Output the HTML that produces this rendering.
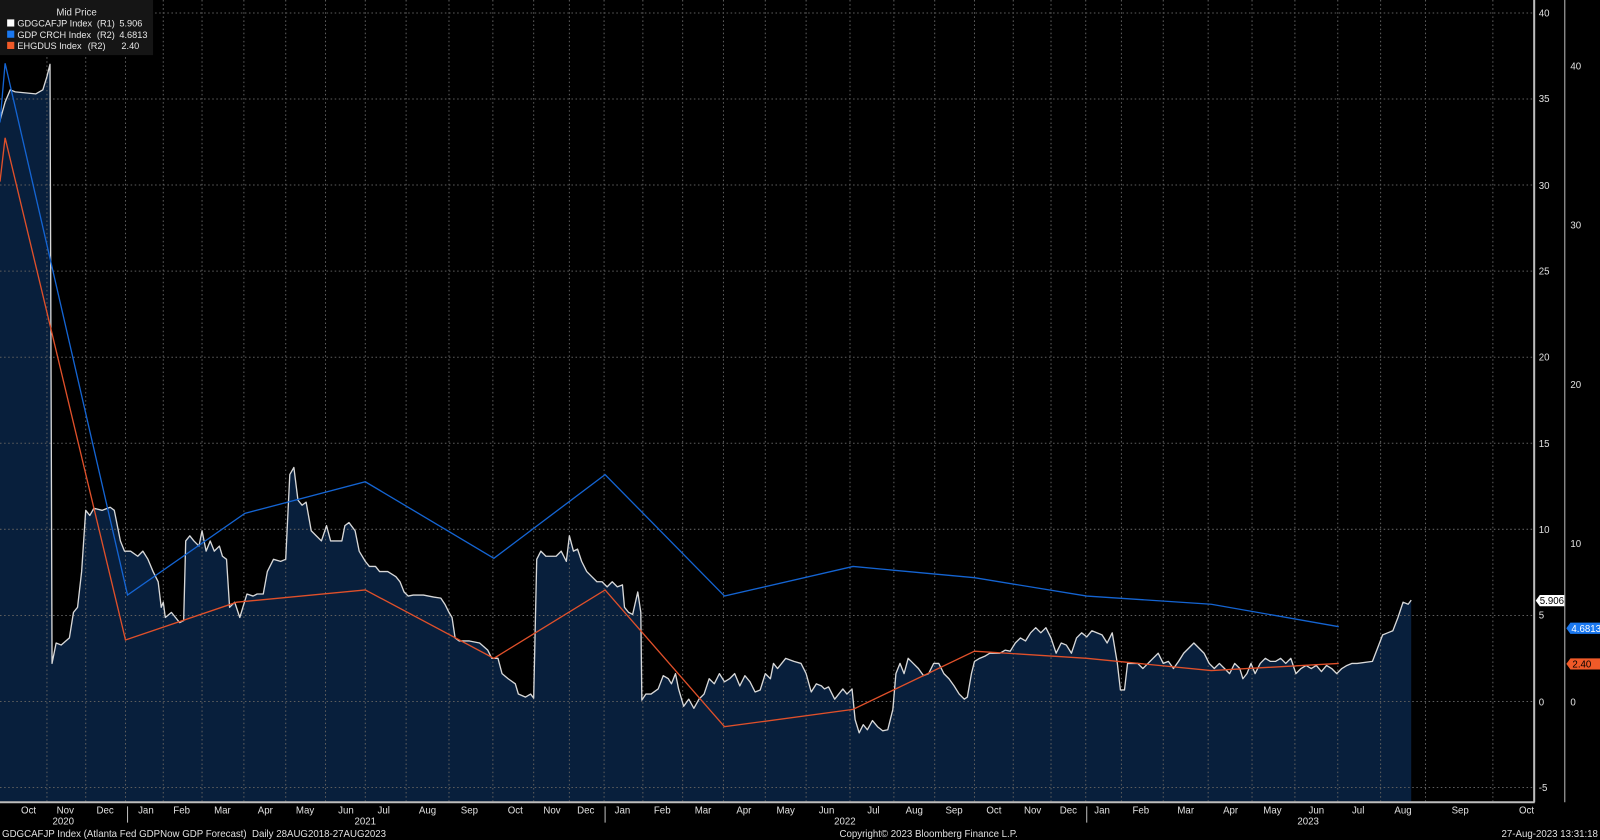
<!DOCTYPE html>
<html><head><meta charset="utf-8"><style>
html,body{margin:0;padding:0;background:#000;overflow:hidden}
svg{display:block}
text{font-family:"Liberation Sans",sans-serif}
</style></head><body>
<svg width="1600" height="840" viewBox="0 0 1568 823" preserveAspectRatio="none" xmlns="http://www.w3.org/2000/svg">
<rect width="1568" height="823" fill="#000"/>
<path fill="#081f3c" d="M0,785 L0,118 5,100 10,88 15,90 35,92 42,88 46,75 49,63 51,650 53,640 55,630 60,632 68,625 72,600 76,595 80,560 84,500 88,505 92,498 100,500 108,497 112,500 118,530 122,540 128,540 135,545 140,540 145,548 150,560 155,570 158,595 160,590 162,605 168,600 172,605 176,610 180,608 182,530 186,525 190,530 195,535 198,520 202,540 206,530 210,540 215,535 218,545 222,548 225,595 230,590 235,605 238,595 242,582 248,584 252,582 258,582 262,560 268,548 275,550 280,548 284,465 288,458 292,490 296,495 300,492 305,520 310,525 315,530 320,515 324,530 328,530 335,530 338,515 342,512 348,520 352,540 358,550 362,555 368,555 372,560 380,560 388,565 392,570 396,580 400,584 405,583 415,583 425,585 432,586 436,592 440,600 443,605 446,625 450,628 460,628 470,630 478,637 482,645 488,645 492,660 498,665 505,670 508,680 515,683 520,680 523,684 526,548 530,540 535,545 545,545 550,540 555,550 558,525 562,540 566,538 570,550 575,560 580,565 585,570 590,570 595,575 600,570 605,575 610,573 612,595 616,600 620,602 625,580 628,600 629,686 633,680 638,680 645,675 650,662 655,665 658,670 662,660 665,675 670,692 675,685 680,694 685,685 690,680 695,665 700,670 705,660 710,668 715,665 720,660 725,672 730,662 735,668 740,678 745,676 750,660 755,665 758,650 762,655 770,645 778,648 785,650 790,660 795,678 800,670 805,672 808,675 812,673 818,685 822,680 826,675 830,680 835,675 838,705 842,718 846,710 850,715 855,706 860,712 865,716 870,715 875,695 878,660 882,650 886,660 890,645 895,650 900,655 905,662 910,660 915,650 920,650 925,660 930,665 935,672 940,680 945,685 948,683 952,660 955,648 960,645 965,643 970,640 975,640 980,640 985,637 990,638 995,630 1000,625 1005,628 1010,620 1015,615 1020,620 1025,615 1030,625 1035,640 1040,630 1045,632 1050,640 1055,625 1060,620 1065,624 1070,618 1080,622 1085,630 1090,620 1095,650 1098,676 1102,676 1105,650 1110,650 1115,650 1120,655 1125,650 1130,645 1135,640 1140,650 1145,648 1150,655 1155,648 1160,640 1165,635 1170,630 1175,635 1180,640 1185,650 1190,655 1195,650 1200,655 1205,660 1210,650 1215,655 1218,665 1222,660 1226,650 1230,660 1235,650 1240,645 1245,648 1250,648 1255,645 1260,650 1265,645 1270,660 1275,655 1280,652 1285,655 1290,652 1295,658 1300,652 1305,655 1310,660 1315,655 1320,652 1325,650 1330,650 1345,648 1350,635 1355,622 1360,620 1365,618 1370,605 1375,590 1380,592 1383,588 L1383,785 Z"/>
<g stroke="#5e5e5e" stroke-width="1" stroke-dasharray="1.5,2.5" fill="none">
<path d="M0,12.7H1503M0,97H1503M0,181.3H1503M0,265.6H1503M0,350H1503M0,434.3H1503M0,518.6H1503M0,603H1503M0,687.3H1503M0,771.6H1503"/>
<path d="M46,0V785M84,0V785M123,0V785M160,0V785M198,0V785M239,0V785M280,0V785M319,0V785M358,0V785M398,0V785M440,0V785M483,0V785M523,0V785M558,0V785M592,0V785M630,0V785M669,0V785M709,0V785M750,0V785M790,0V785M833,0V785M876,0V785M916,0V785M955,0V785M993,0V785M1030,0V785M1064,0V785M1099,0V785M1140,0V785M1184,0V785M1227,0V785M1269,0V785M1311,0V785M1353,0V785M1397,0V785M1463,0V785"/>
</g>
<polyline fill="none" stroke="#d8d8d8" stroke-width="1.3" stroke-linejoin="round" points="0,118 5,100 10,88 15,90 35,92 42,88 46,75 49,63 51,650 53,640 55,630 60,632 68,625 72,600 76,595 80,560 84,500 88,505 92,498 100,500 108,497 112,500 118,530 122,540 128,540 135,545 140,540 145,548 150,560 155,570 158,595 160,590 162,605 168,600 172,605 176,610 180,608 182,530 186,525 190,530 195,535 198,520 202,540 206,530 210,540 215,535 218,545 222,548 225,595 230,590 235,605 238,595 242,582 248,584 252,582 258,582 262,560 268,548 275,550 280,548 284,465 288,458 292,490 296,495 300,492 305,520 310,525 315,530 320,515 324,530 328,530 335,530 338,515 342,512 348,520 352,540 358,550 362,555 368,555 372,560 380,560 388,565 392,570 396,580 400,584 405,583 415,583 425,585 432,586 436,592 440,600 443,605 446,625 450,628 460,628 470,630 478,637 482,645 488,645 492,660 498,665 505,670 508,680 515,683 520,680 523,684 526,548 530,540 535,545 545,545 550,540 555,550 558,525 562,540 566,538 570,550 575,560 580,565 585,570 590,570 595,575 600,570 605,575 610,573 612,595 616,600 620,602 625,580 628,600 629,686 633,680 638,680 645,675 650,662 655,665 658,670 662,660 665,675 670,692 675,685 680,694 685,685 690,680 695,665 700,670 705,660 710,668 715,665 720,660 725,672 730,662 735,668 740,678 745,676 750,660 755,665 758,650 762,655 770,645 778,648 785,650 790,660 795,678 800,670 805,672 808,675 812,673 818,685 822,680 826,675 830,680 835,675 838,705 842,718 846,710 850,715 855,706 860,712 865,716 870,715 875,695 878,660 882,650 886,660 890,645 895,650 900,655 905,662 910,660 915,650 920,650 925,660 930,665 935,672 940,680 945,685 948,683 952,660 955,648 960,645 965,643 970,640 975,640 980,640 985,637 990,638 995,630 1000,625 1005,628 1010,620 1015,615 1020,620 1025,615 1030,625 1035,640 1040,630 1045,632 1050,640 1055,625 1060,620 1065,624 1070,618 1080,622 1085,630 1090,620 1095,650 1098,676 1102,676 1105,650 1110,650 1115,650 1120,655 1125,650 1130,645 1135,640 1140,650 1145,648 1150,655 1155,648 1160,640 1165,635 1170,630 1175,635 1180,640 1185,650 1190,655 1195,650 1200,655 1205,660 1210,650 1215,655 1218,665 1222,660 1226,650 1230,660 1235,650 1240,645 1245,648 1250,648 1255,645 1260,650 1265,645 1270,660 1275,655 1280,652 1285,655 1290,652 1295,658 1300,652 1305,655 1310,660 1315,655 1320,652 1325,650 1330,650 1345,648 1350,635 1355,622 1360,620 1365,618 1370,605 1375,590 1380,592 1383,588"/>
<polyline fill="none" stroke="#1464d2" stroke-width="1.3" points="0,120 5,62 125,583 240,503 358,472 484,547 593,465 710,584 836,555 955,566 1065,584 1187,592 1312,614"/>
<polyline fill="none" stroke="#e0502a" stroke-width="1.3" points="0,178 5,135 123,627 232,590 358,578 484,645 593,578 710,712 836,695 955,638 1065,645 1187,657 1312,650"/>
<g stroke="#bdbdbd" fill="none">
<path d="M1503.5,0V786" stroke-width="2"/>
<path d="M1533.5,0V786" stroke-width="1"/>
<path d="M0,786H1504" stroke-width="2"/>
<path d="M125,790V806M593,790V806M1065,790V806" stroke-width="1"/>
</g>
<g fill="#e0e0e0" font-size="9.5">
<g text-anchor="start">
<text x="1508" y="16">40</text><text x="1508" y="100">35</text><text x="1508" y="185">30</text><text x="1508" y="269">25</text><text x="1508" y="353">20</text><text x="1508" y="438">15</text><text x="1508" y="522">10</text><text x="1508" y="606">5</text><text x="1508" y="691">0</text><text x="1508" y="775">-5</text>
<text x="1539" y="68">40</text><text x="1539" y="224">30</text><text x="1539" y="380">20</text><text x="1539" y="536">10</text><text x="1539" y="691">0</text>
</g>
<g text-anchor="middle">
<text x="28" y="797">Oct</text><text x="64" y="797">Nov</text><text x="103" y="797">Dec</text><text x="143" y="797">Jan</text><text x="178" y="797">Feb</text><text x="218" y="797">Mar</text><text x="260" y="797">Apr</text><text x="299" y="797">May</text><text x="339" y="797">Jun</text><text x="376" y="797">Jul</text><text x="419" y="797">Aug</text><text x="460" y="797">Sep</text><text x="505" y="797">Oct</text><text x="541" y="797">Nov</text><text x="574" y="797">Dec</text><text x="610" y="797">Jan</text><text x="649" y="797">Feb</text><text x="689" y="797">Mar</text><text x="729" y="797">Apr</text><text x="770" y="797">May</text><text x="810" y="797">Jun</text><text x="856" y="797">Jul</text><text x="896" y="797">Aug</text><text x="935" y="797">Sep</text><text x="974" y="797">Oct</text><text x="1012" y="797">Nov</text><text x="1047" y="797">Dec</text><text x="1080" y="797">Jan</text><text x="1118" y="797">Feb</text><text x="1162" y="797">Mar</text><text x="1206" y="797">Apr</text><text x="1247" y="797">May</text><text x="1290" y="797">Jun</text><text x="1331" y="797">Jul</text><text x="1375" y="797">Aug</text><text x="1431" y="797">Sep</text><text x="1496" y="797">Oct</text>
<text x="62" y="808">2020</text><text x="358" y="808">2021</text><text x="828" y="808">2022</text><text x="1282" y="808">2023</text>
<text x="910" y="820">Copyright© 2023 Bloomberg Finance L.P.</text>
</g>
<text x="2" y="820" xml:space="preserve">GDGCAFJP Index (Atlanta Fed GDPNow GDP Forecast)  Daily 28AUG2018-27AUG2023</text>
<text x="1566" y="820" text-anchor="end">27-Aug-2023 13:31:18</text>
</g>
<path d="M1505,588.5 L1509,583 H1533 V594 H1509 Z" fill="#fff"/>
<text x="1509" y="592" font-size="9.5" fill="#000">5.906</text>
<path d="M1535,615.5 L1539,610 H1568 V621 H1539 Z" fill="#1a78f0"/>
<text x="1540" y="619" font-size="9.5" fill="#fff">4.6813</text>
<path d="M1535,650.5 L1539,645 H1568 V656 H1539 Z" fill="#f05a28"/>
<text x="1541" y="654" font-size="9.5" fill="#000">2.40</text>
<rect x="0" y="0" width="150" height="54" fill="#151515"/>
<text x="75" y="15" font-size="9.5" fill="#e0e0e0" text-anchor="middle">Mid Price</text>
<rect x="7" y="19" width="7" height="7" fill="#fff"/>
<rect x="7" y="30" width="7" height="7" fill="#1a78f0"/>
<rect x="7" y="41" width="7" height="7" fill="#f05a28"/>
<g font-size="9" fill="#e8e8e8">
<text x="17" y="26">GDGCAFJP Index</text><text x="95" y="26">(R1)</text><text x="117" y="26">5.906</text>
<text x="17" y="37">GDP CRCH Index</text><text x="95" y="37">(R2)</text><text x="117" y="37">4.6813</text>
<text x="17" y="48">EHGDUS Index</text><text x="86" y="48">(R2)</text><text x="119" y="48">2.40</text>
</g>
</svg>
</body></html>
